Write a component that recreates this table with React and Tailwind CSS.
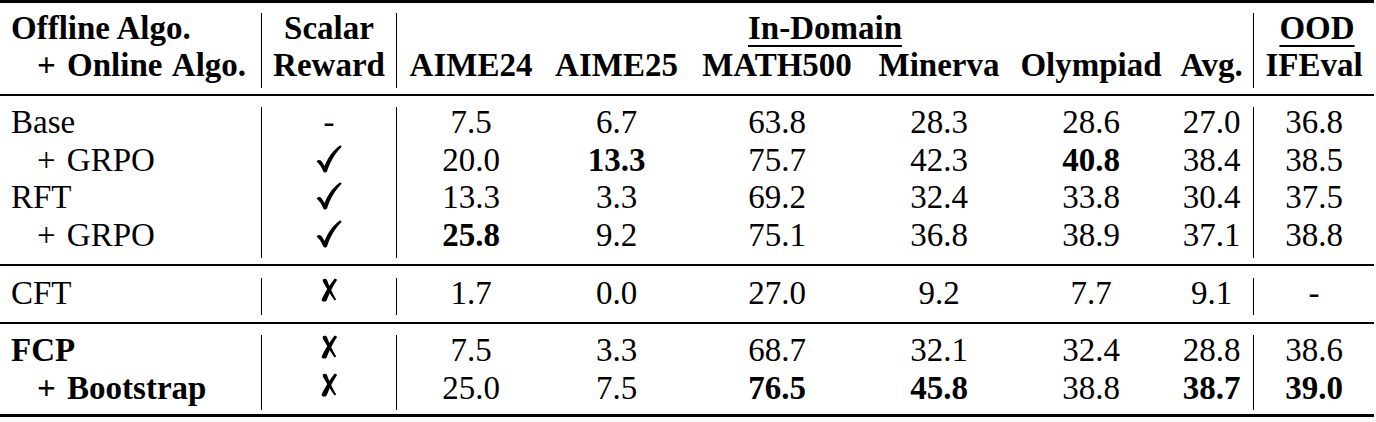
const GRID = 'grid grid-cols-[262px_135px_148px_143px_178px_146px_158px_84px_120px]';
const CELL = 'leading-[31px] pb-[6.7px] whitespace-nowrap';
const VLINE = 'border-r border-black';

function Check() {
  return (
    <svg width="26" height="28" viewBox="0 0 26 28" className="inline-block align-[-2px]">
      <path
        d="M0.5 16.5 C2.5 14.3 4.8 14.8 6.3 17.3 L8.6 21 C12 12.5 17 5.5 24.2 0.3 L25.7 1.8 C19.5 8 14.5 16 11 26.5 C10.4 27.7 8 27.9 7.4 26.8 C5.5 22 3.5 19 0.5 16.5 Z"
        fill="black"
      />
    </svg>
  );
}

function Cross() {
  return (
    <svg width="18" height="24" viewBox="0 0 18 24" className="inline-block align-[2px]">
      <path d="M14.6 0.6 L17.2 1.8 C13.2 8 9.5 15 6.6 22.4 C5.6 24.1 2.2 24 1.6 22.2 C2.8 18 8.2 9 14.6 0.6 Z" fill="black" />
      <path d="M2.8 1.6 C3.8 0.4 6.4 0.6 7 2 C9.2 8 12.2 15 16.2 21.4 L14.6 22.6 C10.4 16.6 6.4 9.5 2.8 3.4 Z" fill="black" />
    </svg>
  );
}

// [label, indent, boldLabel, reward, values...] — a value starting with * is bold
const SECTIONS = [
  {
    pt: 'pt-[10.5px]',
    rows: [
      ['Base', false, false, '-', ['7.5', '6.7', '63.8', '28.3', '28.6', '27.0', '36.8']],
      ['+ GRPO', true, false, 'check', ['20.0', '*13.3', '75.7', '42.3', '*40.8', '38.4', '38.5']],
      ['RFT', false, false, 'check', ['13.3', '3.3', '69.2', '32.4', '33.8', '30.4', '37.5']],
      ['+ GRPO', true, false, 'check', ['*25.8', '9.2', '75.1', '36.8', '38.9', '37.1', '38.8']],
    ],
  },
  {
    pt: 'pt-[11.5px]',
    rows: [['CFT', false, false, 'cross', ['1.7', '0.0', '27.0', '9.2', '7.7', '9.1', '-']]],
  },
  {
    pt: 'pt-[11px]',
    pb: 'pb-[4px]',
    last: true,
    rows: [
      ['FCP', false, true, 'cross', ['7.5', '3.3', '68.7', '32.1', '32.4', '28.8', '38.6']],
      ['+ Bootstrap', true, true, 'cross', ['25.0', '7.5', '*76.5', '*45.8', '38.8', '*38.7', '*39.0']],
    ],
  },
];

function Reward({ kind }) {
  if (kind === 'check') return <Check />;
  if (kind === 'cross') return <Cross />;
  return kind;
}

function DataRow({ row }) {
  const [label, indent, boldLabel, reward, values] = row;
  return (
    <>
      <div
        className={`${CELL} ${VLINE} ${indent ? 'pl-[37px] [word-spacing:3px]' : 'pl-[11px]'} ${boldLabel ? 'font-bold' : ''}`}
      >
        {label}
      </div>
      <div className={`${CELL} ${VLINE} text-center`}>
        <Reward kind={reward} />
      </div>
      {values.map((v, i) => {
        const bold = v.startsWith('*');
        return (
          <div key={i} className={`${CELL} text-center ${bold ? 'font-bold' : ''} ${i === 5 ? VLINE : ''}`}>
            {bold ? v.slice(1) : v}
          </div>
        );
      })}
    </>
  );
}

export default function App() {
  return (
    <div className="bg-white w-[1376px] h-[422px] text-black font-['Liberation_Serif'] text-[33px]">
      <div className="w-[1374px] border-t-[3px] border-black">
        {/* header */}
        <div className={`${GRID} pt-[9.5px] pb-[6.5px] border-b-2 border-black font-bold`}>
          <div className={`${CELL} ${VLINE} pl-[11px]`}>Offline Algo.</div>
          <div className={`${CELL} ${VLINE} text-center`}>Scalar</div>
          <div className={`${CELL} ${VLINE} col-span-6 text-center`}>
            <span className="underline decoration-[1.5px] underline-offset-[6px]">In-Domain</span>
          </div>
          <div className={`${CELL} text-center pl-[6px]`}>
            <span className="underline decoration-[1.5px] underline-offset-[6px]">OOD</span>
          </div>

          <div className={`${CELL} ${VLINE} pl-[37px] [word-spacing:3px]`}>+ Online Algo.</div>
          <div className={`${CELL} ${VLINE} text-center`}>Reward</div>
          <div className={`${CELL} text-center`}>AIME24</div>
          <div className={`${CELL} text-center`}>AIME25</div>
          <div className={`${CELL} text-center`}>MATH500</div>
          <div className={`${CELL} text-center`}>Minerva</div>
          <div className={`${CELL} text-center`}>Olympiad</div>
          <div className={`${CELL} ${VLINE} text-center`}>Avg.</div>
          <div className={`${CELL} text-center`}>IFEval</div>
        </div>

        {SECTIONS.map((s, si) => (
          <div
            key={si}
            className={`${GRID} ${s.pt} ${s.pb ?? 'pb-[6.5px]'} border-black ${s.last ? 'border-b-[3px]' : 'border-b-2'}`}
          >
            {s.rows.map((r, ri) => (
              <DataRow key={ri} row={r} />
            ))}
          </div>
        ))}
      </div>
    </div>
  );
}
